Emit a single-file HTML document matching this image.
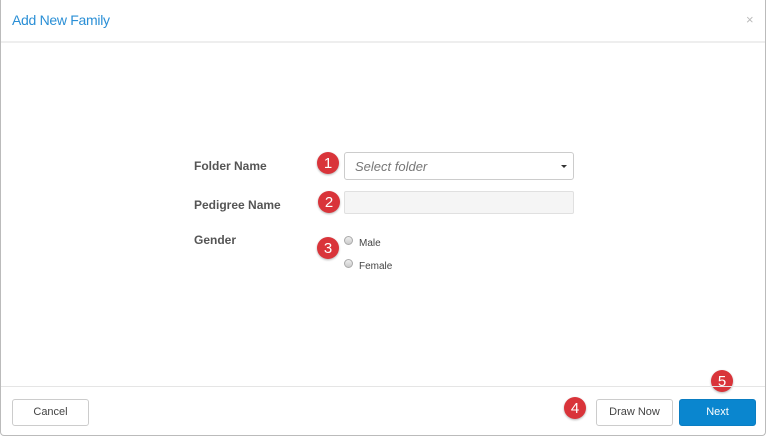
<!DOCTYPE html>
<html><head><style>
*{box-sizing:border-box;margin:0;padding:0}
body{width:768px;height:438px;background:#fff;font-family:"Liberation Sans",Arial,sans-serif;position:relative;overflow:hidden}
.dlg{position:absolute;left:0;top:0;width:766px;height:436px;border:1px solid #bbb;border-top:none;border-radius:0 0 4px 4px}
.a{position:absolute}
.title{left:12px;top:12px;font-size:14px;color:#2a8fd6;letter-spacing:-0.3px}
.x{left:746px;top:12px;font-size:13px;color:#bbb}
.hl{left:1px;top:41px;width:764px;height:2px;background:#eee}
.fl{left:1px;top:386px;width:764px;height:1px;background:#e5e5e5}
.lbl{font-size:12px;font-weight:bold;color:#555}
.b{width:22px;height:22px;border-radius:50%;background:#d9343a;color:#fff;font-size:15px;text-align:center;line-height:23px;box-shadow:0 1px 2px rgba(0,0,0,.3)}
.sel{left:344px;top:152px;width:230px;height:28px;border:1px solid #ccc;border-radius:3px;font-size:13px;font-style:italic;color:#777;padding:6px 10px}
.car{position:absolute;right:6px;top:12px;border-left:3px solid transparent;border-right:3px solid transparent;border-top:3px solid #333}
.inp{left:344px;top:191px;width:230px;height:23px;border:1px solid #e0e0e0;border-radius:2px;background:#f5f5f5}
.r{width:9px;height:9px;border-radius:50%;border:1px solid #aaa;background:linear-gradient(#eee,#ccc)}
.rt{font-size:10px;color:#444}
.btn{height:27px;width:77px;border:1px solid #ccc;border-radius:3px;font-size:11px;color:#444;text-align:center;line-height:25px;background:#fff}
</style></head><body>
<div class="dlg"></div>
<div class="a title">Add New Family</div>
<div class="a x">×</div>
<div class="a hl"></div>
<div class="a lbl" style="left:194px;top:159px">Folder Name</div>
<div class="a lbl" style="left:194px;top:198px">Pedigree Name</div>
<div class="a lbl" style="left:194px;top:233px">Gender</div>
<div class="a b" style="left:317px;top:152px">1</div>
<div class="a b" style="left:318px;top:191px">2</div>
<div class="a b" style="left:317px;top:237px">3</div>
<div class="a b" style="left:564px;top:397px">4</div>
<div class="a b" style="left:711px;top:370px">5</div>
<div class="a sel">Select folder<span class="car"></span></div>
<div class="a inp"></div>
<div class="a r" style="left:344px;top:236px"></div>
<div class="a rt" style="left:359px;top:238px">Male</div>
<div class="a r" style="left:344px;top:259px"></div>
<div class="a rt" style="left:359px;top:261px">Female</div>
<div class="a fl"></div>
<div class="a btn" style="left:12px;top:399px">Cancel</div>
<div class="a btn" style="left:596px;top:399px">Draw Now</div>
<div class="a btn" style="left:679px;top:399px;background:#0a86cf;border-color:#0a7dc2;color:#fff">Next</div>
</body></html>
